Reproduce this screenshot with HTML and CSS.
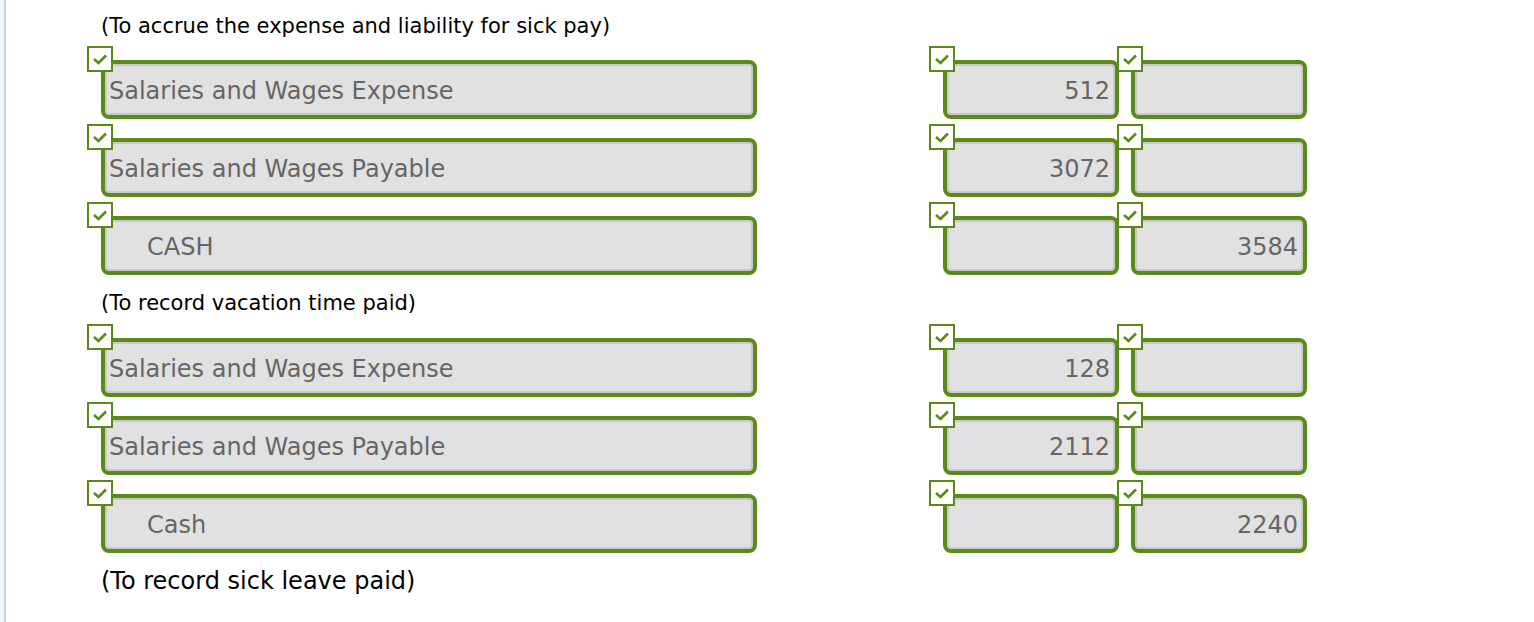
FILE: index.html
```html
<!DOCTYPE html>
<html>
<head>
<meta charset="utf-8">
<link rel="stylesheet" href="styles.css">
</head>
<body>
<div class="page">
  <div class="sheet">
    <p class="note cond">(To accrue the expense and liability for sick pay)</p>

    <div class="row">
      <div class="cell acct"><span class="chk"><svg viewBox="0 0 26 26"><path d="M7 13 L11.5 17 L19 9.5"/></svg></span><div class="box"><span class="val">Salaries and Wages Expense</span></div></div>
      <div class="cell dr"><span class="chk"><svg viewBox="0 0 26 26"><path d="M7 13 L11.5 17 L19 9.5"/></svg></span><div class="box num"><span class="val">512</span></div></div>
      <div class="cell cr"><span class="chk"><svg viewBox="0 0 26 26"><path d="M7 13 L11.5 17 L19 9.5"/></svg></span><div class="box num"><span class="val"></span></div></div>
    </div>
    <div class="row">
      <div class="cell acct"><span class="chk"><svg viewBox="0 0 26 26"><path d="M7 13 L11.5 17 L19 9.5"/></svg></span><div class="box"><span class="val">Salaries and Wages Payable</span></div></div>
      <div class="cell dr"><span class="chk"><svg viewBox="0 0 26 26"><path d="M7 13 L11.5 17 L19 9.5"/></svg></span><div class="box num"><span class="val">3072</span></div></div>
      <div class="cell cr"><span class="chk"><svg viewBox="0 0 26 26"><path d="M7 13 L11.5 17 L19 9.5"/></svg></span><div class="box num"><span class="val"></span></div></div>
    </div>
    <div class="row">
      <div class="cell acct"><span class="chk"><svg viewBox="0 0 26 26"><path d="M7 13 L11.5 17 L19 9.5"/></svg></span><div class="box indent"><span class="val">CASH</span></div></div>
      <div class="cell dr"><span class="chk"><svg viewBox="0 0 26 26"><path d="M7 13 L11.5 17 L19 9.5"/></svg></span><div class="box num"><span class="val"></span></div></div>
      <div class="cell cr"><span class="chk"><svg viewBox="0 0 26 26"><path d="M7 13 L11.5 17 L19 9.5"/></svg></span><div class="box num"><span class="val">3584</span></div></div>
    </div>

    <p class="note cond">(To record vacation time paid)</p>

    <div class="row">
      <div class="cell acct"><span class="chk"><svg viewBox="0 0 26 26"><path d="M7 13 L11.5 17 L19 9.5"/></svg></span><div class="box"><span class="val">Salaries and Wages Expense</span></div></div>
      <div class="cell dr"><span class="chk"><svg viewBox="0 0 26 26"><path d="M7 13 L11.5 17 L19 9.5"/></svg></span><div class="box num"><span class="val">128</span></div></div>
      <div class="cell cr"><span class="chk"><svg viewBox="0 0 26 26"><path d="M7 13 L11.5 17 L19 9.5"/></svg></span><div class="box num"><span class="val"></span></div></div>
    </div>
    <div class="row">
      <div class="cell acct"><span class="chk"><svg viewBox="0 0 26 26"><path d="M7 13 L11.5 17 L19 9.5"/></svg></span><div class="box"><span class="val">Salaries and Wages Payable</span></div></div>
      <div class="cell dr"><span class="chk"><svg viewBox="0 0 26 26"><path d="M7 13 L11.5 17 L19 9.5"/></svg></span><div class="box num"><span class="val">2112</span></div></div>
      <div class="cell cr"><span class="chk"><svg viewBox="0 0 26 26"><path d="M7 13 L11.5 17 L19 9.5"/></svg></span><div class="box num"><span class="val"></span></div></div>
    </div>
    <div class="row">
      <div class="cell acct"><span class="chk"><svg viewBox="0 0 26 26"><path d="M7 13 L11.5 17 L19 9.5"/></svg></span><div class="box indent"><span class="val">Cash</span></div></div>
      <div class="cell dr"><span class="chk"><svg viewBox="0 0 26 26"><path d="M7 13 L11.5 17 L19 9.5"/></svg></span><div class="box num"><span class="val"></span></div></div>
      <div class="cell cr"><span class="chk"><svg viewBox="0 0 26 26"><path d="M7 13 L11.5 17 L19 9.5"/></svg></span><div class="box num"><span class="val">2240</span></div></div>
    </div>

    <p class="note wide">(To record sick leave paid)</p>
  </div>
</div>
</body>
</html>
```

FILE: styles.css
```css
html, body {
  margin: 0;
  padding: 0;
  background: #ffffff;
}

.page {
  border-left: 4px solid #f2f5fa;
  min-height: 622px;
  box-sizing: border-box;
}

.sheet {
  border-left: 2px solid #c9d3df;
  min-height: 622px;
  box-sizing: border-box;
  padding: 10px 0 0 81px;
}

.note {
  margin: 0 0 4px 14px;
  height: 32px;
  line-height: 32px;
  color: #000;
  white-space: nowrap;
}

.row + .note {
  margin-top: 12px;
  margin-bottom: 5px;
}

.cond {
  font-family: "DejaVu Sans", sans-serif;
  font-size: 21px;
}

.wide {
  font-family: "DejaVu Sans", sans-serif;
  font-size: 24px;
}

.row {
  display: flex;
  margin-bottom: 5px;
}

.cell {
  position: relative;
  padding: 14px 0 0 14px;
}

.acct { width: 656px; }
.dr { width: 176px; margin-left: 172px; }
.cr { width: 176px; margin-left: -2px; }

.chk {
  position: absolute;
  left: 0;
  top: 0;
  width: 26px;
  height: 26px;
  box-sizing: border-box;
  border: 2px solid #5b8a19;
  background: #fff;
  z-index: 2;
}

.chk svg {
  position: absolute;
  left: -2px;
  top: -2px;
  width: 26px;
  height: 26px;
}

.chk path {
  fill: none;
  stroke: #5b8a19;
  stroke-width: 2.6;
}

.box {
  height: 59px;
  box-sizing: border-box;
  border: 4px solid #5b8a19;
  border-radius: 8px;
  background: #e1e1e1;
  box-shadow: inset 0 0 0 2px #c9c9c9;
  display: flex;
  align-items: center;
  padding: 2px 4px 0;
  font-family: "DejaVu Sans", sans-serif;
  font-size: 24px;
  color: #666;
  white-space: nowrap;
}

.box.num {
  justify-content: flex-end;
  padding-right: 5px;
}

.box.indent {
  padding-left: 42px;
}
```
